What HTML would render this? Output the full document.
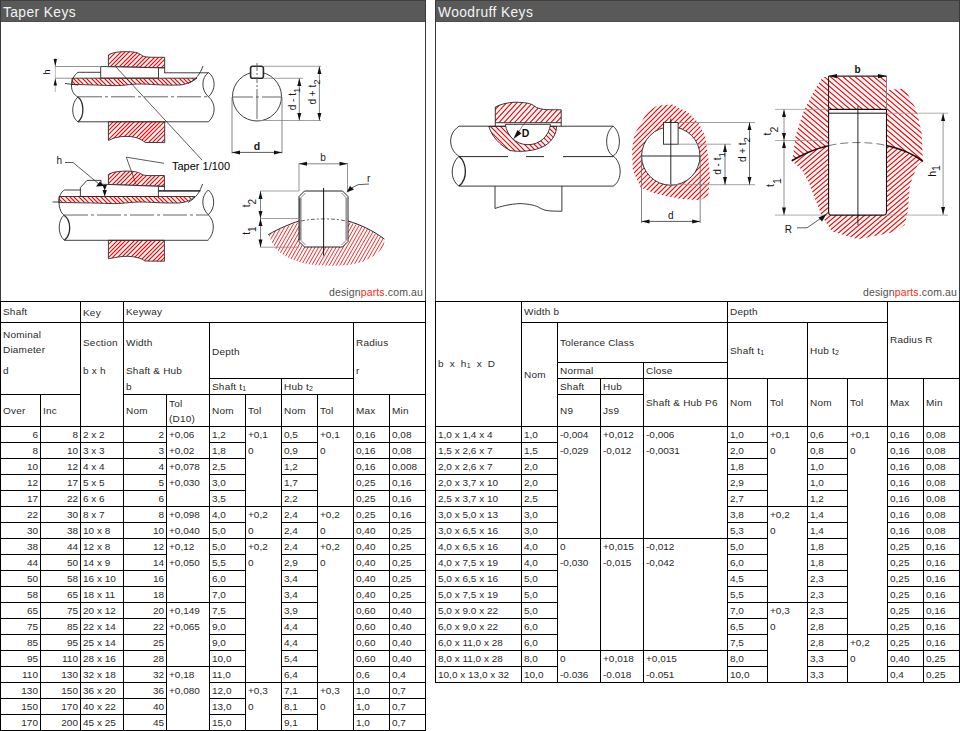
<!DOCTYPE html>
<html><head><meta charset="utf-8"><style>
html,body{margin:0;padding:0;background:#fff;}
body{width:960px;height:731px;position:relative;overflow:hidden;font-family:"Liberation Sans",sans-serif;}
.c{position:absolute;box-sizing:border-box;border:1px solid #000;}
.t{position:absolute;font-size:10px;line-height:20px;color:#2a2a2a;white-space:nowrap;transform:scaleY(0.9);transform-origin:0 13px;}
.th{position:absolute;font-size:10px;line-height:20px;color:#2a2a2a;white-space:nowrap;letter-spacing:0.2px;transform:scaleY(0.9);transform-origin:0 13px;}
.t sub,.th sub{font-size:7px;vertical-align:-1px;line-height:0;}
.panel{position:absolute;top:0;box-sizing:border-box;border-left:1px solid #3a3a3a;border-right:1px solid #3a3a3a;border-top:1px solid #404040;}
.hd{position:absolute;left:0;right:0;top:0;height:20px;background:#595959;border-bottom:1px solid #4e4e4e;}
.ttl{position:absolute;left:2px;top:2px;font-size:13.8px;letter-spacing:0.4px;line-height:20px;color:#f4f4f4;white-space:nowrap;}
.brand{position:absolute;font-size:10.5px;line-height:20px;color:#505050;white-space:nowrap;letter-spacing:0.13px;}
.brand span{color:#ff2a1a;}
svg{position:absolute;top:0;left:0;}
</style></head><body>
<div class="panel" style="left:0;width:426px;height:302px">
  <div class="hd"></div><div class="ttl">Taper Keys</div>
</div>
<div class="panel" style="left:435px;width:525px;height:302px">
  <div class="hd"></div><div class="ttl">Woodruff Keys</div>
</div>
<svg width="430" height="300" viewBox="0 0 430 300" style="position:absolute;left:0;top:0">
<defs>
<pattern id="hf" patternUnits="userSpaceOnUse" width="4.3" height="4.3"><path d="M-1,1.1 L1.1,-1 M0,4.3 L4.3,0 M3.2,5.4 L5.4,3.2" stroke="#ff0000" stroke-width="1.2"/></pattern>
<pattern id="hb" patternUnits="userSpaceOnUse" width="4.3" height="4.3"><path d="M-1,3.2 L1.1,5.4 M0,0 L4.3,4.3 M3.2,-1 L5.4,1.1" stroke="#ff0000" stroke-width="1.2"/></pattern>
<marker id="ar" viewBox="0 0 10 10" refX="10" refY="5" markerWidth="6" markerHeight="4" orient="auto-start-reverse" markerUnits="userSpaceOnUse"><path d="M0,0 L10,5 L0,10 Z" fill="#111"/></marker>
</defs>
<g fill="none" stroke="#2a2a2a" stroke-width="0.9">
<!-- ===== TOP ASSEMBLY ===== -->
<clipPath id="cp1"><path d="M108.4,66.5 L108.4,55 C112,52.5 120,51.2 130,51.8 C136,52 139,53 142,55.5 C145,57.5 150,57.3 164.7,57.3 L164.7,67.8 Z"/></clipPath><path clip-path="url(#cp1)" d="M81.20,69.80L101.80,49.20M86.20,69.80L106.80,49.20M90.20,69.80L110.80,49.20M94.20,69.80L114.80,49.20M98.20,69.80L118.80,49.20M103.20,69.80L123.80,49.20M107.20,69.80L127.80,49.20M111.20,69.80L131.80,49.20M116.20,69.80L136.80,49.20M120.20,69.80L140.80,49.20M124.20,69.80L144.80,49.20M129.20,69.80L149.80,49.20M133.20,69.80L153.80,49.20M137.20,69.80L157.80,49.20M142.20,69.80L162.80,49.20M146.20,69.80L166.80,49.20M150.20,69.80L170.80,49.20M154.20,69.80L174.80,49.20M159.20,69.80L179.80,49.20M163.20,69.80L183.80,49.20M167.20,69.80L187.80,49.20" stroke="#ff0000" stroke-width="1.15" fill="none"/><path d="M108.4,66.5 L108.4,55 C112,52.5 120,51.2 130,51.8 C136,52 139,53 142,55.5 C145,57.5 150,57.3 164.7,57.3 L164.7,67.8 Z" fill="none"/>
<path d="M100.7,66.5 L158.5,67.8 L158.5,78.2 L100.7,78.2 Z" fill="#fff"/>
<path d="M158.5,67.8 L164.7,67.8 L164.7,73.2"/>
<path d="M78,72.3 L100.7,72.3 M164.7,72.8 L208.5,72.8"/>
<clipPath id="cp2"><path d="M72,78.2 L197,78.2 C193,81 188,84 180,85 C160,85.5 150,84 140,84 C130,84 122,86.2 110,85.5 C95,85 80,84.5 72,84.5 Z"/></clipPath><path clip-path="url(#cp2)" d="M53.20,76.20L65.20,88.20M58.20,76.20L70.20,88.20M62.20,76.20L74.20,88.20M67.20,76.20L79.20,88.20M71.20,76.20L83.20,88.20M75.20,76.20L87.20,88.20M80.20,76.20L92.20,88.20M84.20,76.20L96.20,88.20M89.20,76.20L101.20,88.20M93.20,76.20L105.20,88.20M97.20,76.20L109.20,88.20M102.20,76.20L114.20,88.20M106.20,76.20L118.20,88.20M111.20,76.20L123.20,88.20M115.20,76.20L127.20,88.20M119.20,76.20L131.20,88.20M124.20,76.20L136.20,88.20M128.20,76.20L140.20,88.20M133.20,76.20L145.20,88.20M137.20,76.20L149.20,88.20M141.20,76.20L153.20,88.20M146.20,76.20L158.20,88.20M150.20,76.20L162.20,88.20M155.20,76.20L167.20,88.20M159.20,76.20L171.20,88.20M163.20,76.20L175.20,88.20M168.20,76.20L180.20,88.20M172.20,76.20L184.20,88.20M177.20,76.20L189.20,88.20M181.20,76.20L193.20,88.20M185.20,76.20L197.20,88.20M190.20,76.20L202.20,88.20M194.20,76.20L206.20,88.20M199.20,76.20L211.20,88.20M203.20,76.20L215.20,88.20" stroke="#ff0000" stroke-width="1.15" fill="none"/><path d="M72,78.2 L197,78.2 C193,81 188,84 180,85 C160,85.5 150,84 140,84 C130,84 122,86.2 110,85.5 C95,85 80,84.5 72,84.5 Z" fill="none"/>
<path d="M78,72.3 C74,75 71.5,80 71.5,86 C71.5,91 74,95 78,97"/>
<path d="M78,97 C72,102 70,116 78,122"/>
<path d="M78,97 C84,102 85,116 78,122" stroke-width="1.3"/>
<path d="M65,83.5 L78,85"/>
<path d="M203,66 C200,74 196,80 188,83.5"/>
<path d="M208.5,72.5 C201,78 201,90 208.5,96.8 M208.5,72.5 C216,78 216,90 208.5,96.8 M208.5,96.8 C216,103 216,115 208.5,121.8"/>
<path d="M78,121.8 L208.5,121.8"/>
<path d="M78,96.8 L208,96.8" stroke="#555" stroke-dasharray="24,3,3,3"/>
<clipPath id="cp3"><path d="M108.4,121.8 L164.7,121.8 L164.7,142.6 L145.5,142.5 C143,141 141,139 136,137.5 C130,136 122,136 116,137.5 C112,138.5 110,140 108.4,140.4 Z"/></clipPath><path clip-path="url(#cp3)" d="M77.40,144.60L102.20,119.80M81.40,144.60L106.20,119.80M85.40,144.60L110.20,119.80M90.40,144.60L115.20,119.80M94.40,144.60L119.20,119.80M98.40,144.60L123.20,119.80M103.40,144.60L128.20,119.80M107.40,144.60L132.20,119.80M111.40,144.60L136.20,119.80M116.40,144.60L141.20,119.80M120.40,144.60L145.20,119.80M124.40,144.60L149.20,119.80M129.40,144.60L154.20,119.80M133.40,144.60L158.20,119.80M137.40,144.60L162.20,119.80M141.40,144.60L166.20,119.80M146.40,144.60L171.20,119.80M150.40,144.60L175.20,119.80M154.40,144.60L179.20,119.80M159.40,144.60L184.20,119.80M163.40,144.60L188.20,119.80M167.40,144.60L192.20,119.80" stroke="#ff0000" stroke-width="1.15" fill="none"/><path d="M108.4,121.8 L164.7,121.8 L164.7,142.6 L145.5,142.5 C143,141 141,139 136,137.5 C130,136 122,136 116,137.5 C112,138.5 110,140 108.4,140.4 Z" fill="none"/>
<path d="M55,66.5 L100.7,66.5 M55,78.2 L72,78.2" stroke="#777" stroke-width="0.8"/>
<path d="M55.3,58 L55.3,92" stroke="#999" stroke-width="0.7"/>
<path d="M53.6,59 L57,59 L55.3,66.4 Z M53.6,85.6 L57,85.6 L55.3,78.4 Z" fill="#111" stroke="none"/>
<path d="M116,67 L202,160" stroke="#333" stroke-width="0.8"/>
<!-- ===== BOTTOM ASSEMBLY ===== -->
<clipPath id="cp4"><path d="M108.4,184.5 L108.4,174.5 C112,172 120,170.8 130,171.2 C136,171.5 139,172.5 142,174.5 C145,176 150,175.5 164.4,175.5 L164.4,186.3 Z"/></clipPath><path clip-path="url(#cp4)" d="M82.70,188.30L102.20,168.80M86.70,188.30L106.20,168.80M91.70,188.30L111.20,168.80M95.70,188.30L115.20,168.80M99.70,188.30L119.20,168.80M103.70,188.30L123.20,168.80M108.70,188.30L128.20,168.80M112.70,188.30L132.20,168.80M116.70,188.30L136.20,168.80M121.70,188.30L141.20,168.80M125.70,188.30L145.20,168.80M129.70,188.30L149.20,168.80M133.70,188.30L153.20,168.80M138.70,188.30L158.20,168.80M142.70,188.30L162.20,168.80M146.70,188.30L166.20,168.80M151.70,188.30L171.20,168.80M155.70,188.30L175.20,168.80M159.70,188.30L179.20,168.80M164.70,188.30L184.20,168.80M168.70,188.30L188.20,168.80" stroke="#ff0000" stroke-width="1.15" fill="none"/><path d="M108.4,184.5 L108.4,174.5 C112,172 120,170.8 130,171.2 C136,171.5 139,172.5 142,174.5 C145,176 150,175.5 164.4,175.5 L164.4,186.3 Z" fill="none"/>
<path d="M80.4,196.5 L80.4,187.5 L87,180.4 L101,180.4 L101,184.2 L158.4,186.3 L158.4,196.5 Z" fill="#fff"/>
<path d="M158.4,186.3 L164.4,186.3 L164.4,190.9"/>
<path d="M64.4,190 L80.4,190 M158.4,190.9 L200.3,190.9" />
<path d="M158.4,190.9 L200.3,190.9" stroke-width="1.4"/>
<clipPath id="cp5"><path d="M59,196.5 L195,196.5 C192,199.5 187,202.5 178,203 C160,203.2 150,202 140,202 C130,202 122,204 110,203.5 C95,203 75,202.6 59,202.6 Z"/></clipPath><path clip-path="url(#cp5)" d="M41.50,194.50L53.00,206.00M45.50,194.50L57.00,206.00M49.50,194.50L61.00,206.00M54.50,194.50L66.00,206.00M58.50,194.50L70.00,206.00M63.50,194.50L75.00,206.00M67.50,194.50L79.00,206.00M71.50,194.50L83.00,206.00M76.50,194.50L88.00,206.00M80.50,194.50L92.00,206.00M85.50,194.50L97.00,206.00M89.50,194.50L101.00,206.00M93.50,194.50L105.00,206.00M98.50,194.50L110.00,206.00M102.50,194.50L114.00,206.00M107.50,194.50L119.00,206.00M111.50,194.50L123.00,206.00M115.50,194.50L127.00,206.00M120.50,194.50L132.00,206.00M124.50,194.50L136.00,206.00M129.50,194.50L141.00,206.00M133.50,194.50L145.00,206.00M137.50,194.50L149.00,206.00M142.50,194.50L154.00,206.00M146.50,194.50L158.00,206.00M151.50,194.50L163.00,206.00M155.50,194.50L167.00,206.00M159.50,194.50L171.00,206.00M164.50,194.50L176.00,206.00M168.50,194.50L180.00,206.00M173.50,194.50L185.00,206.00M177.50,194.50L189.00,206.00M181.50,194.50L193.00,206.00M186.50,194.50L198.00,206.00M190.50,194.50L202.00,206.00M195.50,194.50L207.00,206.00M199.50,194.50L211.00,206.00" stroke="#ff0000" stroke-width="1.15" fill="none"/><path d="M59,196.5 L195,196.5 C192,199.5 187,202.5 178,203 C160,203.2 150,202 140,202 C130,202 122,204 110,203.5 C95,203 75,202.6 59,202.6 Z" fill="none"/>
<path d="M64.4,190 C61,192 59,196 59,202 C59,208 61,213 64,215.2"/>
<path d="M64,215.2 C58,220 57,234 64.4,240.3"/>
<path d="M64,215.2 C71,220 72,234 64.4,240.3" stroke-width="1.3"/>
<path d="M52.5,202 L60,202"/>
<path d="M202.5,184 C200,192 196,198 188,202.5"/>
<path d="M208.3,190 C201,196 201,208 208.3,214.8 M208.3,190 C215.5,196 215.5,208 208.3,214.8 M208.3,214.8 C215,221 215,233 208.3,239.7"/>
<path d="M64.4,240.3 L208.3,240.3"/>
<path d="M64,215 L208,215" stroke="#555" stroke-dasharray="24,3,3,3"/>
<clipPath id="cp6"><path d="M108.4,240.3 L164.4,240.3 L164.4,261.2 L145,261 C143,259.5 141,258.5 137,257.5 C131,256 125,256 118,257 C113,257.8 110,258.5 108.4,258.7 Z"/></clipPath><path clip-path="url(#cp6)" d="M76.80,263.20L101.70,238.30M81.80,263.20L106.70,238.30M85.80,263.20L110.70,238.30M89.80,263.20L114.70,238.30M94.80,263.20L119.70,238.30M98.80,263.20L123.70,238.30M102.80,263.20L127.70,238.30M106.80,263.20L131.70,238.30M111.80,263.20L136.70,238.30M115.80,263.20L140.70,238.30M119.80,263.20L144.70,238.30M124.80,263.20L149.70,238.30M128.80,263.20L153.70,238.30M132.80,263.20L157.70,238.30M137.80,263.20L162.70,238.30M141.80,263.20L166.70,238.30M145.80,263.20L170.70,238.30M150.80,263.20L175.70,238.30M154.80,263.20L179.70,238.30M158.80,263.20L183.70,238.30M162.80,263.20L187.70,238.30M167.80,263.20L192.70,238.30" stroke="#ff0000" stroke-width="1.15" fill="none"/><path d="M108.4,240.3 L164.4,240.3 L164.4,261.2 L145,261 C143,259.5 141,258.5 137,257.5 C131,256 125,256 118,257 C113,257.8 110,258.5 108.4,258.7 Z" fill="none"/>
<path d="M65,162.5 L73,162.5 L99,184" stroke="#333" stroke-width="0.8"/>
<path d="M96,186.5 L104,186 L100,181.5 Z" fill="#111" stroke="none"/>
<path d="M104.7,184.2 L104.7,196.5" stroke="#555" stroke-width="0.8" stroke-dasharray="2,1"/>
<path d="M102.5,190 L106.9,190 L104.7,196.5 Z M102.5,185 L106.9,185 L104.7,190.5 Z" fill="#111" stroke="none"/>
<path d="M164,163.3 L126.3,157.2 L136.3,184.9" stroke="#333" stroke-width="0.8"/>
<!-- ===== CIRCLE VIEW ===== -->
<circle cx="257" cy="96.5" r="24.5"/>
<rect x="250.6" y="66.3" width="12.8" height="12" rx="2" fill="#fff" stroke-width="1.6"/>
<path d="M257,63 L257,120.5" stroke="#555" stroke-dasharray="8,2,2,2,6,2,2,2,30"/>
<path d="M232,97 L282,97" stroke="#555" stroke-dasharray="21,3,3,3,30"/>
<path d="M263.4,66.3 L321,66.3 M263.4,78.3 L303,78.3 M257,120.5 L321,120.5" stroke="#888" stroke-width="0.8"/>
<path d="M299.3,78.3 L299.3,120.5 M319.4,66.3 L319.4,120.5" stroke="#666" stroke-width="0.8"/>
<path d="M297.3,86 L301.3,86 L299.3,78.3 Z M297.3,113 L301.3,113 L299.3,120.5 Z M317.4,74 L321.4,74 L319.4,66.3 Z M317.4,113 L321.4,113 L319.4,120.5 Z" fill="#111" stroke="none"/>
<path d="M232,97 L232,153.5 M282,97 L282,153.5" stroke="#777" stroke-width="0.9"/>
<path d="M232,152.4 L282,152.4" stroke="#444" stroke-width="0.9"/>
<path d="M232,152.4 L240,150.4 L240,154.4 Z M282,152.4 L274,150.4 L274,154.4 Z" fill="#111" stroke="none"/>
<!-- ===== KEY SECTION ===== -->
<clipPath id="cp7"><path d="M268.2,234.7 C285,226 300,220.5 323.5,218.5 C345,218.5 365,226 384.4,239 L384,246 C380,252 372,258 362,262 C350,266 335,266 323,265.5 C300,265 285,258 275,248 Z"/></clipPath><path clip-path="url(#cp7)" d="M233.27,268.00L262.70,216.50M236.77,268.00L266.20,216.50M240.27,268.00L269.70,216.50M243.77,268.00L273.20,216.50M247.27,268.00L276.70,216.50M250.77,268.00L280.20,216.50M254.27,268.00L283.70,216.50M257.77,268.00L287.20,216.50M261.27,268.00L290.70,216.50M264.77,268.00L294.20,216.50M268.27,268.00L297.70,216.50M271.77,268.00L301.20,216.50M275.27,268.00L304.70,216.50M278.77,268.00L308.20,216.50M282.27,268.00L311.70,216.50M285.77,268.00L315.20,216.50M289.27,268.00L318.70,216.50M292.77,268.00L322.20,216.50M296.27,268.00L325.70,216.50M299.77,268.00L329.20,216.50M303.27,268.00L332.70,216.50M306.77,268.00L336.20,216.50M310.27,268.00L339.70,216.50M313.77,268.00L343.20,216.50M317.27,268.00L346.70,216.50M320.77,268.00L350.20,216.50M324.27,268.00L353.70,216.50M327.77,268.00L357.20,216.50M331.27,268.00L360.70,216.50M334.77,268.00L364.20,216.50M338.27,268.00L367.70,216.50M341.77,268.00L371.20,216.50M345.27,268.00L374.70,216.50M348.77,268.00L378.20,216.50M352.27,268.00L381.70,216.50M355.77,268.00L385.20,216.50M359.27,268.00L388.70,216.50M362.77,268.00L392.20,216.50M366.27,268.00L395.70,216.50M369.77,268.00L399.20,216.50M373.27,268.00L402.70,216.50M376.77,268.00L406.20,216.50M380.27,268.00L409.70,216.50M383.77,268.00L413.20,216.50M387.27,268.00L416.70,216.50" stroke="#ff0000" stroke-width="0.85" fill="none"/>
<path d="M268.2,234.7 C280,228 290,224 299,221 M348,221 C360,224.5 372,230 384.4,239" stroke="#222" stroke-width="1"/>
<path d="M304.5,191 L342.5,191 L348,196.5 L348,241.5 L342.5,247 L304.5,247 L299,241.5 L299,196.5 Z" fill="#fff" stroke="#222" stroke-width="1"/>
<path d="M305.5,193 L301,197.5 L301,240.5 L305.5,245 M341.5,193 L346,197.5 L346,240.5 L341.5,245" stroke="#777" stroke-width="0.9"/>
<path d="M346.8,198 L346.8,240" stroke="#999" stroke-width="1.6"/>
<path d="M299.8,198 L299.8,240" stroke="#444" stroke-width="1.2"/>
<path d="M301,221 C312,218.5 335,218 346,221" stroke="#555" stroke-width="0.9" stroke-dasharray="4,2,2,2"/>
<path d="M323.6,188 L323.6,255.5" stroke="#111" stroke-width="1"/>
<path d="M299,163 L299,191 M347.5,163 L347.5,191" stroke="#888" stroke-width="0.9"/>
<path d="M299,163.8 L347.5,163.8" stroke="#666" stroke-width="0.8"/>
<path d="M299,163.8 L307,161.8 L307,165.8 Z M347.5,163.8 L339.5,161.8 L339.5,165.8 Z" fill="#111" stroke="none"/>
<path d="M260,191 L299,191 M260,218.5 L301,218.5 M260,247.2 L299,247.2" stroke="#888" stroke-width="0.8"/>
<path d="M260.5,191 L260.5,247.2" stroke="#666" stroke-width="0.8"/>
<path d="M258.5,199 L262.5,199 L260.5,191 Z M258.5,211 L262.5,211 L260.5,218.5 Z M258.5,226 L262.5,226 L260.5,218.5 Z M258.5,239.5 L262.5,239.5 L260.5,247.2 Z" fill="#111" stroke="none"/>
<path d="M352,187.7 L358,184.7 L369,184" stroke="#333" stroke-width="0.8"/>
<path d="M346.5,192.5 L350,186 L354,189.5 Z" fill="#111" stroke="none"/>
</g>
<g font-family="Liberation Sans" fill="#1a1a1a">
<text x="0" y="0" font-size="9.5" transform="translate(49.8,72.2) rotate(-90)" text-anchor="middle" fill="#000">h</text>
<text x="56.5" y="164" font-size="10">h</text>
<text x="172" y="169.6" font-size="11" fill="#000">Taper 1/100</text>
<text x="0" y="0" font-size="10" transform="translate(295.5,99) rotate(-90)" text-anchor="middle">d - t<tspan font-size="9.5" dy="4">1</tspan></text>
<text x="0" y="0" font-size="10" transform="translate(315.5,92) rotate(-90)" text-anchor="middle">d + t<tspan font-size="9.5" dy="4">2</tspan></text>
<text x="257" y="149.5" font-size="10.5" font-weight="bold" text-anchor="middle">d</text>
<text x="323" y="161" font-size="10" text-anchor="middle">b</text>
<text x="367" y="182" font-size="10">r</text>
<text x="0" y="0" font-size="10" transform="translate(249.5,203) rotate(-90)" text-anchor="middle">t<tspan font-size="10" dy="6.5">2</tspan></text>
<text x="0" y="0" font-size="10" transform="translate(249.5,230.5) rotate(-90)" text-anchor="middle">t<tspan font-size="10" dy="6.5">1</tspan></text>
</g>
</svg>

<svg width="960" height="300" viewBox="0 0 960 300" style="position:absolute;left:0;top:0">
<defs>
<pattern id="hb6" patternUnits="userSpaceOnUse" width="6" height="6"><path d="M-1,5 L1,7 M0,0 L6,6 M5,-1 L7,1" stroke="#ff0000" stroke-width="1.1"/></pattern>
<pattern id="hf45" patternUnits="userSpaceOnUse" width="4.5" height="4.5"><path d="M-1,1 L1,-1 M0,4.5 L4.5,0 M3.5,5.5 L5.5,3.5" stroke="#ff0000" stroke-width="1.05"/></pattern>
<pattern id="hb45" patternUnits="userSpaceOnUse" width="4.5" height="4.5"><path d="M-1,3.5 L1,5.5 M0,0 L4.5,4.5 M3.5,-1 L5.5,1" stroke="#ff0000" stroke-width="1.05"/></pattern>
</defs>
<g fill="none" stroke="#222" stroke-width="0.9">
<!-- ===== WOODRUFF SHAFT ===== -->
<clipPath id="cp8"><path d="M495.3,122.7 L495.3,107 C500,104.5 507,102.5 515,102.2 C525,102.5 531,103 535,106.5 C539,109.5 545,109.9 561.2,109.8 L561.2,122.7 Z"/></clipPath><path clip-path="url(#cp8)" d="M465.83,124.70L488.10,100.20M471.03,124.70L493.30,100.20M476.23,124.70L498.50,100.20M481.43,124.70L503.70,100.20M486.63,124.70L508.90,100.20M491.83,124.70L514.10,100.20M497.03,124.70L519.30,100.20M502.23,124.70L524.50,100.20M507.43,124.70L529.70,100.20M512.63,124.70L534.90,100.20M517.83,124.70L540.10,100.20M523.03,124.70L545.30,100.20M528.23,124.70L550.50,100.20M533.43,124.70L555.70,100.20M538.63,124.70L560.90,100.20M543.83,124.70L566.10,100.20M549.03,124.70L571.30,100.20M554.23,124.70L576.50,100.20M559.43,124.70L581.70,100.20M564.63,124.70L586.90,100.20" stroke="#ff0000" stroke-width="1.15" fill="none"/><path d="M495.3,122.7 L495.3,107 C500,104.5 507,102.5 515,102.2 C525,102.5 531,103 535,106.5 C539,109.5 545,109.9 561.2,109.8 L561.2,122.7 Z" fill="none"/>
<path d="M495.3,122.7 L495.3,126.3 M561.2,122.7 L561.2,126.3"/>
<path d="M459,126.2 L613.1,126.2"/>
<clipPath id="cp9"><path d="M488.8,126.4 C492,137 500,145 510,150.5 C518,152 535,152 546,145 C553,140 556.5,133 556.5,126.4 Z"/></clipPath><path clip-path="url(#cp9)" d="M452.40,124.40L482.00,154.00M457.40,124.40L487.00,154.00M462.40,124.40L492.00,154.00M467.40,124.40L497.00,154.00M472.40,124.40L502.00,154.00M478.40,124.40L508.00,154.00M483.40,124.40L513.00,154.00M488.40,124.40L518.00,154.00M493.40,124.40L523.00,154.00M498.40,124.40L528.00,154.00M504.40,124.40L534.00,154.00M509.40,124.40L539.00,154.00M514.40,124.40L544.00,154.00M519.40,124.40L549.00,154.00M524.40,124.40L554.00,154.00M530.40,124.40L560.00,154.00M535.40,124.40L565.00,154.00M540.40,124.40L570.00,154.00M545.40,124.40L575.00,154.00M550.40,124.40L580.00,154.00M556.40,124.40L586.00,154.00M561.40,124.40L591.00,154.00" stroke="#ff0000" stroke-width="1.15" fill="none"/><path d="M488.8,126.4 C492,137 500,145 510,150.5 C518,152 535,152 546,145 C553,140 556.5,133 556.5,126.4 Z" fill="none"/>
<path d="M505.3,124.3 L550.5,124.3 C549,136 540,144.7 528,144.7 C516,144.7 507,136 505.3,124.3 Z" fill="#fff"/>
<path d="M459,126.2 C452,131 450.5,137 450.7,142 C451,148 454,153 459,156.3"/>
<path d="M459,156.3 C451,163 449,179 459,186.1"/>
<path d="M459,156.3 C467,163 468,179 459,186.1" stroke-width="1.3"/>
<path d="M613.1,126.2 C605,132 604,150 613.1,156.1 M613.1,126.2 C621,132 622,150 613.1,156.1 M613.1,156.1 C622,162 623,180 613.1,186.2"/>
<path d="M459,186.1 L613.1,186.1"/>
<path d="M459,156.6 L613,156.6" stroke="#111" stroke-dasharray="49,18,18,19,200"/>
<path d="M495,186.1 L495,208.5 C500,206.5 510,204 520,203.6 C530,204 536,205.5 540,208 C545,211 550,211.2 561.9,211.2 L561.9,186.1"/>
<path d="M525,122.5 L517,134" stroke="#333" stroke-width="0.6"/>
<path d="M513.3,139 L517.5,130 L521.5,133.5 Z" fill="#111" stroke="none"/>
<!-- ===== WOODRUFF CIRCLE ===== -->
<clipPath id="cp10"><path d="M661.2,105.2 L672.2,104.4 L687.9,112.3 L698.9,123.3 L705.2,135.9 L708.3,157.9 L710,176.8 L708.3,195.6 L700.5,200.3 L680,198.8 L656.4,194 L640.7,187.8 L632.9,170.5 L632,150 L634.4,134.3 L640.7,123.3 L647,112.3 L656.4,106 Z"/></clipPath><path clip-path="url(#cp10)" d="M524.70,202.30L624.60,102.40M529.70,202.30L629.60,102.40M534.70,202.30L634.60,102.40M539.70,202.30L639.60,102.40M544.70,202.30L644.60,102.40M549.70,202.30L649.60,102.40M554.70,202.30L654.60,102.40M559.70,202.30L659.60,102.40M564.70,202.30L664.60,102.40M569.70,202.30L669.60,102.40M574.70,202.30L674.60,102.40M579.70,202.30L679.60,102.40M584.70,202.30L684.60,102.40M589.70,202.30L689.60,102.40M594.70,202.30L694.60,102.40M599.70,202.30L699.60,102.40M604.70,202.30L704.60,102.40M609.70,202.30L709.60,102.40M614.70,202.30L714.60,102.40M619.70,202.30L719.60,102.40M624.70,202.30L724.60,102.40M629.70,202.30L729.60,102.40M634.70,202.30L734.60,102.40M639.70,202.30L739.60,102.40M644.70,202.30L744.60,102.40M649.70,202.30L749.60,102.40M654.70,202.30L754.60,102.40M659.70,202.30L759.60,102.40M664.70,202.30L764.60,102.40M669.70,202.30L769.60,102.40M674.70,202.30L774.60,102.40M679.70,202.30L779.60,102.40M684.70,202.30L784.60,102.40M689.70,202.30L789.60,102.40M694.70,202.30L794.60,102.40M699.70,202.30L799.60,102.40M704.70,202.30L804.60,102.40M709.70,202.30L809.60,102.40M714.70,202.30L814.60,102.40" stroke="#ff0000" stroke-width="1.15" fill="none"/>
<circle cx="670.8" cy="156" r="29.2" fill="#fff"/>
<rect x="663.5" y="122.5" width="14.6" height="21.7" fill="#fff"/>
<path d="M670.8,118.6 L670.8,184.6 M641.5,156 L700.2,156" stroke="#111" stroke-width="0.9"/>
<path d="M678.1,122.5 L755,122.5 M678.1,144.2 L731,144.2 M670.8,184.7 L755,184.7" stroke="#888" stroke-width="0.8"/>
<path d="M725,144.2 L725,184.7 M749.5,122.5 L749.5,184.7" stroke="#555" stroke-width="0.8"/>
<path d="M723,152 L727,152 L725,144.2 Z M723,177 L727,177 L725,184.7 Z M747.5,130 L751.5,130 L749.5,122.5 Z M747.5,177 L751.5,177 L749.5,184.7 Z" fill="#111" stroke="none"/>
<path d="M641.5,156 L641.5,223 M700.2,156 L700.2,223" stroke="#666" stroke-width="0.8"/>
<path d="M641.5,221.4 L700.2,221.4" stroke="#333" stroke-width="0.8"/>
<path d="M641.5,221.4 L649.5,219.4 L649.5,223.4 Z M700.2,221.4 L692.2,219.4 L692.2,223.4 Z" fill="#111" stroke="none"/>
<!-- ===== WOODRUFF KEY SECTION ===== -->
<clipPath id="cp11"><path d="M791.7,160.8 C805,153 815,148.5 828.6,145.7 L886.5,145.5 C900,148.5 912,153 922.9,161.3 L921.6,132.7 L916.4,109.4 L904.7,88.6 L886.5,90 L886.5,76.1 L822.9,76.9 L813.8,91.2 L803.4,112 L795.6,135.3 L793,156 Z"/></clipPath><path clip-path="url(#cp11)" d="M678.56,74.10L783.50,163.30M684.76,74.10L789.70,163.30M690.96,74.10L795.90,163.30M697.16,74.10L802.10,163.30M703.36,74.10L808.30,163.30M709.56,74.10L814.50,163.30M715.76,74.10L820.70,163.30M721.96,74.10L826.90,163.30M728.16,74.10L833.10,163.30M734.36,74.10L839.30,163.30M740.56,74.10L845.50,163.30M746.76,74.10L851.70,163.30M752.96,74.10L857.90,163.30M759.16,74.10L864.10,163.30M765.36,74.10L870.30,163.30M771.56,74.10L876.50,163.30M777.76,74.10L882.70,163.30M783.96,74.10L888.90,163.30M790.16,74.10L895.10,163.30M796.36,74.10L901.30,163.30M802.56,74.10L907.50,163.30M808.76,74.10L913.70,163.30M814.96,74.10L919.90,163.30M821.16,74.10L926.10,163.30M827.36,74.10L932.30,163.30M833.56,74.10L938.50,163.30M839.76,74.10L944.70,163.30M845.96,74.10L950.90,163.30M852.16,74.10L957.10,163.30M858.36,74.10L963.30,163.30M864.56,74.10L969.50,163.30M870.76,74.10L975.70,163.30M876.96,74.10L981.90,163.30M883.16,74.10L988.10,163.30M889.36,74.10L994.30,163.30M895.56,74.10L1000.50,163.30M901.76,74.10L1006.70,163.30M907.96,74.10L1012.90,163.30M914.16,74.10L1019.10,163.30M920.36,74.10L1025.30,163.30M926.56,74.10L1031.50,163.30" stroke="#ff0000" stroke-width="1.15" fill="none"/>
<clipPath id="cp12"><path d="M791.7,160.8 C805,153 815,148.5 828.6,145.7 L886.5,145.5 C900,148.5 912,153 922.9,161.3 L917.7,165 L909.9,185 L908,210 L904.7,225 L894.3,232 L858,239.2 L832,231.4 L821.6,215.8 L808.6,182 L802,170 Z"/></clipPath><path clip-path="url(#cp12)" d="M669.06,241.20L784.00,143.50M674.76,241.20L789.70,143.50M680.46,241.20L795.40,143.50M686.16,241.20L801.10,143.50M691.86,241.20L806.80,143.50M697.56,241.20L812.50,143.50M703.26,241.20L818.20,143.50M708.96,241.20L823.90,143.50M714.66,241.20L829.60,143.50M720.36,241.20L835.30,143.50M726.06,241.20L841.00,143.50M731.76,241.20L846.70,143.50M737.46,241.20L852.40,143.50M743.16,241.20L858.10,143.50M748.86,241.20L863.80,143.50M754.56,241.20L869.50,143.50M760.26,241.20L875.20,143.50M765.96,241.20L880.90,143.50M771.66,241.20L886.60,143.50M777.36,241.20L892.30,143.50M783.06,241.20L898.00,143.50M788.76,241.20L903.70,143.50M794.46,241.20L909.40,143.50M800.16,241.20L915.10,143.50M805.86,241.20L920.80,143.50M811.56,241.20L926.50,143.50M817.26,241.20L932.20,143.50M822.96,241.20L937.90,143.50M828.66,241.20L943.60,143.50M834.36,241.20L949.30,143.50M840.06,241.20L955.00,143.50M845.76,241.20L960.70,143.50M851.46,241.20L966.40,143.50M857.16,241.20L972.10,143.50M862.86,241.20L977.80,143.50M868.56,241.20L983.50,143.50M874.26,241.20L989.20,143.50M879.96,241.20L994.90,143.50M885.66,241.20L1000.60,143.50M891.36,241.20L1006.30,143.50M897.06,241.20L1012.00,143.50M902.76,241.20L1017.70,143.50M908.46,241.20L1023.40,143.50M914.16,241.20L1029.10,143.50M919.86,241.20L1034.80,143.50M925.56,241.20L1040.50,143.50" stroke="#ff0000" stroke-width="1.15" fill="none"/>
<path d="M828.6,109.4 L886.5,109.4 L886.5,212 Q886.5,215.1 883.5,215.1 L831.6,215.1 Q828.6,215.1 828.6,212 Z" fill="#fff" stroke="#111" stroke-width="1.1"/>
<path d="M828.6,113.2 L886.5,113.2" stroke="#111" stroke-width="1"/>
<path d="M828.6,76.1 L828.6,109.4" stroke="#111" stroke-width="1"/>
<path d="M886.5,76.1 L886.5,109.4" stroke="#777" stroke-width="0.9"/>
<path d="M828.6,76.1 L886.5,76.1" stroke="#222" stroke-width="1.1"/>
<path d="M828.6,76.1 L837,74 L837,78.2 Z M886.5,76.1 L878,74 L878,78.2 Z" fill="#111" stroke="none"/>
<path d="M791.7,160.8 C805,153 815,148.5 828.6,145.7 M886.5,145.5 C900,148.5 912,153 922.9,161.3" stroke="#111" stroke-width="1.6"/>
<path d="M828.6,145.7 C845,141.5 870,141.5 886.5,145.5" stroke="#555" stroke-width="0.8" stroke-dasharray="8,4"/>
<path d="M857.9,106.2 L857.9,225" stroke="#111" stroke-width="0.9"/>
<path d="M775,109.4 L828.6,109.4 M775,140.5 L830,140.5 M775,215.1 L828.6,215.1" stroke="#999" stroke-width="0.8"/>
<path d="M886.5,113.2 L948,113.2 M886.5,215.1 L948,215.1" stroke="#999" stroke-width="0.8"/>
<path d="M784,109.4 L784,215.1 M943.1,113.3 L943.1,214.8" stroke="#777" stroke-width="0.8"/>
<path d="M782,117 L786,117 L784,109.4 Z M782,133 L786,133 L784,140.5 Z M782,148 L786,148 L784,140.5 Z M782,207.5 L786,207.5 L784,215.1 Z M941.1,121 L945.1,121 L943.1,113.3 Z M941.1,207 L945.1,207 L943.1,214.8 Z" fill="#111" stroke="none"/>
<path d="M797,227.8 L807,227.8 L822,217.5" stroke="#333" stroke-width="0.8"/>
<path d="M826.5,214 L818.5,217.5 L822,221.5 Z" fill="#111" stroke="none"/>
</g>
<g font-family="Liberation Sans" fill="#111">
<text x="521.8" y="137.3" font-size="10.5" font-weight="bold">D</text>
<text x="0" y="0" font-size="10" transform="translate(720.5,163.5) rotate(-90)" text-anchor="middle">d - t<tspan font-size="9.5" dy="4">1</tspan></text>
<text x="0" y="0" font-size="10" transform="translate(746,149.6) rotate(-90)" text-anchor="middle">d + t<tspan font-size="9.5" dy="4">2</tspan></text>
<text x="670.8" y="218.5" font-size="10" text-anchor="middle">d</text>
<text x="857.5" y="72.5" font-size="10" font-weight="bold" text-anchor="middle">b</text>
<text x="0" y="0" font-size="10.5" transform="translate(771,131) rotate(-90)" text-anchor="middle">t<tspan font-size="10.5" dy="6.8">2</tspan></text>
<text x="0" y="0" font-size="10.5" transform="translate(774.4,182.5) rotate(-90)" text-anchor="middle">t<tspan font-size="10.5" dy="7">1</tspan></text>
<text x="0" y="0" font-size="10.5" transform="translate(935.6,171) rotate(-90)" text-anchor="middle">h<tspan font-size="10.5" dy="4.4">1</tspan></text>
<text x="784.7" y="232.7" font-size="10">R</text>
</g>
</svg>

<div class="brand" style="right:537px;top:282px">design<span>parts</span>.com.au</div>
<div class="brand" style="right:3px;top:282px">design<span>parts</span>.com.au</div>
<div class="c" style="left:0px;top:301px;width:81px;height:22px"></div>
<div class="c" style="left:80px;top:301px;width:44px;height:22px"></div>
<div class="c" style="left:123px;top:301px;width:303px;height:22px"></div>
<div class="c" style="left:0px;top:322px;width:81px;height:73px"></div>
<div class="c" style="left:80px;top:322px;width:44px;height:105px"></div>
<div class="c" style="left:123px;top:322px;width:87px;height:73px"></div>
<div class="c" style="left:209px;top:322px;width:145px;height:57px"></div>
<div class="c" style="left:353px;top:322px;width:73px;height:73px"></div>
<div class="c" style="left:209px;top:378px;width:73px;height:17px"></div>
<div class="c" style="left:281px;top:378px;width:73px;height:17px"></div>
<div class="c" style="left:0px;top:394px;width:41px;height:33px"></div>
<div class="c" style="left:40px;top:394px;width:41px;height:33px"></div>
<div class="c" style="left:123px;top:394px;width:44px;height:33px"></div>
<div class="c" style="left:166px;top:394px;width:44px;height:33px"></div>
<div class="c" style="left:209px;top:394px;width:37px;height:33px"></div>
<div class="c" style="left:245px;top:394px;width:37px;height:33px"></div>
<div class="c" style="left:281px;top:394px;width:37px;height:33px"></div>
<div class="c" style="left:317px;top:394px;width:37px;height:33px"></div>
<div class="c" style="left:353px;top:394px;width:37px;height:33px"></div>
<div class="c" style="left:389px;top:394px;width:37px;height:33px"></div>
<div class="th" style="left:3px;top:302px">Shaft</div>
<div class="th" style="left:83px;top:303px">Key</div>
<div class="th" style="left:126px;top:302px">Keyway</div>
<div class="th" style="left:3px;top:325px">Nominal</div>
<div class="th" style="left:3px;top:340px">Diameter</div>
<div class="th" style="left:3px;top:361px">d</div>
<div class="th" style="left:83px;top:333px">Section</div>
<div class="th" style="left:83px;top:361px">b x h</div>
<div class="th" style="left:126px;top:333px">Width</div>
<div class="th" style="left:126px;top:361px">Shaft &amp; Hub</div>
<div class="th" style="left:126px;top:377px">b</div>
<div class="th" style="left:212px;top:342px">Depth</div>
<div class="th" style="left:356px;top:333px">Radius</div>
<div class="th" style="left:356px;top:361px">r</div>
<div class="th" style="left:212px;top:377px">Shaft t<sub>1</sub></div>
<div class="th" style="left:284px;top:377px">Hub t<sub>2</sub></div>
<div class="th" style="left:3px;top:401px">Over</div>
<div class="th" style="left:43px;top:401px">Inc</div>
<div class="th" style="left:126px;top:401px">Nom</div>
<div class="th" style="left:169px;top:394px">Tol</div>
<div class="th" style="left:169px;top:409px">(D10)</div>
<div class="th" style="left:212px;top:401px">Nom</div>
<div class="th" style="left:248px;top:401px">Tol</div>
<div class="th" style="left:284px;top:401px">Nom</div>
<div class="th" style="left:320px;top:401px">Tol</div>
<div class="th" style="left:356px;top:401px">Max</div>
<div class="th" style="left:392px;top:401px">Min</div>
<div class="c" style="left:0px;top:426px;width:41px;height:17px"></div>
<div class="c" style="left:40px;top:426px;width:41px;height:17px"></div>
<div class="c" style="left:80px;top:426px;width:44px;height:17px"></div>
<div class="c" style="left:123px;top:426px;width:44px;height:17px"></div>
<div class="c" style="left:209px;top:426px;width:37px;height:17px"></div>
<div class="c" style="left:281px;top:426px;width:37px;height:17px"></div>
<div class="c" style="left:353px;top:426px;width:37px;height:17px"></div>
<div class="c" style="left:389px;top:426px;width:37px;height:17px"></div>
<div class="t" style="right:922px;top:425px">6</div>
<div class="t" style="right:882px;top:425px">8</div>
<div class="t" style="left:83px;top:425px">2 x 2</div>
<div class="t" style="right:796px;top:425px">2</div>
<div class="t" style="left:212px;top:425px">1,2</div>
<div class="t" style="left:284px;top:425px">0,5</div>
<div class="t" style="left:356px;top:425px">0,16</div>
<div class="t" style="left:392px;top:425px">0,08</div>
<div class="c" style="left:0px;top:442px;width:41px;height:17px"></div>
<div class="c" style="left:40px;top:442px;width:41px;height:17px"></div>
<div class="c" style="left:80px;top:442px;width:44px;height:17px"></div>
<div class="c" style="left:123px;top:442px;width:44px;height:17px"></div>
<div class="c" style="left:209px;top:442px;width:37px;height:17px"></div>
<div class="c" style="left:281px;top:442px;width:37px;height:17px"></div>
<div class="c" style="left:353px;top:442px;width:37px;height:17px"></div>
<div class="c" style="left:389px;top:442px;width:37px;height:17px"></div>
<div class="t" style="right:922px;top:441px">8</div>
<div class="t" style="right:882px;top:441px">10</div>
<div class="t" style="left:83px;top:441px">3 x 3</div>
<div class="t" style="right:796px;top:441px">3</div>
<div class="t" style="left:212px;top:441px">1,8</div>
<div class="t" style="left:284px;top:441px">0,9</div>
<div class="t" style="left:356px;top:441px">0,16</div>
<div class="t" style="left:392px;top:441px">0,08</div>
<div class="c" style="left:0px;top:458px;width:41px;height:17px"></div>
<div class="c" style="left:40px;top:458px;width:41px;height:17px"></div>
<div class="c" style="left:80px;top:458px;width:44px;height:17px"></div>
<div class="c" style="left:123px;top:458px;width:44px;height:17px"></div>
<div class="c" style="left:209px;top:458px;width:37px;height:17px"></div>
<div class="c" style="left:281px;top:458px;width:37px;height:17px"></div>
<div class="c" style="left:353px;top:458px;width:37px;height:17px"></div>
<div class="c" style="left:389px;top:458px;width:37px;height:17px"></div>
<div class="t" style="right:922px;top:457px">10</div>
<div class="t" style="right:882px;top:457px">12</div>
<div class="t" style="left:83px;top:457px">4 x 4</div>
<div class="t" style="right:796px;top:457px">4</div>
<div class="t" style="left:212px;top:457px">2,5</div>
<div class="t" style="left:284px;top:457px">1,2</div>
<div class="t" style="left:356px;top:457px">0,16</div>
<div class="t" style="left:392px;top:457px">0,008</div>
<div class="c" style="left:0px;top:474px;width:41px;height:17px"></div>
<div class="c" style="left:40px;top:474px;width:41px;height:17px"></div>
<div class="c" style="left:80px;top:474px;width:44px;height:17px"></div>
<div class="c" style="left:123px;top:474px;width:44px;height:17px"></div>
<div class="c" style="left:209px;top:474px;width:37px;height:17px"></div>
<div class="c" style="left:281px;top:474px;width:37px;height:17px"></div>
<div class="c" style="left:353px;top:474px;width:37px;height:17px"></div>
<div class="c" style="left:389px;top:474px;width:37px;height:17px"></div>
<div class="t" style="right:922px;top:473px">12</div>
<div class="t" style="right:882px;top:473px">17</div>
<div class="t" style="left:83px;top:473px">5 x 5</div>
<div class="t" style="right:796px;top:473px">5</div>
<div class="t" style="left:212px;top:473px">3,0</div>
<div class="t" style="left:284px;top:473px">1,7</div>
<div class="t" style="left:356px;top:473px">0,25</div>
<div class="t" style="left:392px;top:473px">0,16</div>
<div class="c" style="left:0px;top:490px;width:41px;height:17px"></div>
<div class="c" style="left:40px;top:490px;width:41px;height:17px"></div>
<div class="c" style="left:80px;top:490px;width:44px;height:17px"></div>
<div class="c" style="left:123px;top:490px;width:44px;height:17px"></div>
<div class="c" style="left:209px;top:490px;width:37px;height:17px"></div>
<div class="c" style="left:281px;top:490px;width:37px;height:17px"></div>
<div class="c" style="left:353px;top:490px;width:37px;height:17px"></div>
<div class="c" style="left:389px;top:490px;width:37px;height:17px"></div>
<div class="t" style="right:922px;top:489px">17</div>
<div class="t" style="right:882px;top:489px">22</div>
<div class="t" style="left:83px;top:489px">6 x 6</div>
<div class="t" style="right:796px;top:489px">6</div>
<div class="t" style="left:212px;top:489px">3,5</div>
<div class="t" style="left:284px;top:489px">2,2</div>
<div class="t" style="left:356px;top:489px">0,25</div>
<div class="t" style="left:392px;top:489px">0,16</div>
<div class="c" style="left:0px;top:506px;width:41px;height:17px"></div>
<div class="c" style="left:40px;top:506px;width:41px;height:17px"></div>
<div class="c" style="left:80px;top:506px;width:44px;height:17px"></div>
<div class="c" style="left:123px;top:506px;width:44px;height:17px"></div>
<div class="c" style="left:209px;top:506px;width:37px;height:17px"></div>
<div class="c" style="left:281px;top:506px;width:37px;height:17px"></div>
<div class="c" style="left:353px;top:506px;width:37px;height:17px"></div>
<div class="c" style="left:389px;top:506px;width:37px;height:17px"></div>
<div class="t" style="right:922px;top:505px">22</div>
<div class="t" style="right:882px;top:505px">30</div>
<div class="t" style="left:83px;top:505px">8 x 7</div>
<div class="t" style="right:796px;top:505px">8</div>
<div class="t" style="left:212px;top:505px">4,0</div>
<div class="t" style="left:284px;top:505px">2,4</div>
<div class="t" style="left:356px;top:505px">0,25</div>
<div class="t" style="left:392px;top:505px">0,16</div>
<div class="c" style="left:0px;top:522px;width:41px;height:17px"></div>
<div class="c" style="left:40px;top:522px;width:41px;height:17px"></div>
<div class="c" style="left:80px;top:522px;width:44px;height:17px"></div>
<div class="c" style="left:123px;top:522px;width:44px;height:17px"></div>
<div class="c" style="left:209px;top:522px;width:37px;height:17px"></div>
<div class="c" style="left:281px;top:522px;width:37px;height:17px"></div>
<div class="c" style="left:353px;top:522px;width:37px;height:17px"></div>
<div class="c" style="left:389px;top:522px;width:37px;height:17px"></div>
<div class="t" style="right:922px;top:521px">30</div>
<div class="t" style="right:882px;top:521px">38</div>
<div class="t" style="left:83px;top:521px">10 x 8</div>
<div class="t" style="right:796px;top:521px">10</div>
<div class="t" style="left:212px;top:521px">5,0</div>
<div class="t" style="left:284px;top:521px">2,4</div>
<div class="t" style="left:356px;top:521px">0,40</div>
<div class="t" style="left:392px;top:521px">0,25</div>
<div class="c" style="left:0px;top:538px;width:41px;height:17px"></div>
<div class="c" style="left:40px;top:538px;width:41px;height:17px"></div>
<div class="c" style="left:80px;top:538px;width:44px;height:17px"></div>
<div class="c" style="left:123px;top:538px;width:44px;height:17px"></div>
<div class="c" style="left:209px;top:538px;width:37px;height:17px"></div>
<div class="c" style="left:281px;top:538px;width:37px;height:17px"></div>
<div class="c" style="left:353px;top:538px;width:37px;height:17px"></div>
<div class="c" style="left:389px;top:538px;width:37px;height:17px"></div>
<div class="t" style="right:922px;top:537px">38</div>
<div class="t" style="right:882px;top:537px">44</div>
<div class="t" style="left:83px;top:537px">12 x 8</div>
<div class="t" style="right:796px;top:537px">12</div>
<div class="t" style="left:212px;top:537px">5,0</div>
<div class="t" style="left:284px;top:537px">2,4</div>
<div class="t" style="left:356px;top:537px">0,40</div>
<div class="t" style="left:392px;top:537px">0,25</div>
<div class="c" style="left:0px;top:554px;width:41px;height:17px"></div>
<div class="c" style="left:40px;top:554px;width:41px;height:17px"></div>
<div class="c" style="left:80px;top:554px;width:44px;height:17px"></div>
<div class="c" style="left:123px;top:554px;width:44px;height:17px"></div>
<div class="c" style="left:209px;top:554px;width:37px;height:17px"></div>
<div class="c" style="left:281px;top:554px;width:37px;height:17px"></div>
<div class="c" style="left:353px;top:554px;width:37px;height:17px"></div>
<div class="c" style="left:389px;top:554px;width:37px;height:17px"></div>
<div class="t" style="right:922px;top:553px">44</div>
<div class="t" style="right:882px;top:553px">50</div>
<div class="t" style="left:83px;top:553px">14 x 9</div>
<div class="t" style="right:796px;top:553px">14</div>
<div class="t" style="left:212px;top:553px">5,5</div>
<div class="t" style="left:284px;top:553px">2,9</div>
<div class="t" style="left:356px;top:553px">0,40</div>
<div class="t" style="left:392px;top:553px">0,25</div>
<div class="c" style="left:0px;top:570px;width:41px;height:17px"></div>
<div class="c" style="left:40px;top:570px;width:41px;height:17px"></div>
<div class="c" style="left:80px;top:570px;width:44px;height:17px"></div>
<div class="c" style="left:123px;top:570px;width:44px;height:17px"></div>
<div class="c" style="left:209px;top:570px;width:37px;height:17px"></div>
<div class="c" style="left:281px;top:570px;width:37px;height:17px"></div>
<div class="c" style="left:353px;top:570px;width:37px;height:17px"></div>
<div class="c" style="left:389px;top:570px;width:37px;height:17px"></div>
<div class="t" style="right:922px;top:569px">50</div>
<div class="t" style="right:882px;top:569px">58</div>
<div class="t" style="left:83px;top:569px">16 x 10</div>
<div class="t" style="right:796px;top:569px">16</div>
<div class="t" style="left:212px;top:569px">6,0</div>
<div class="t" style="left:284px;top:569px">3,4</div>
<div class="t" style="left:356px;top:569px">0,40</div>
<div class="t" style="left:392px;top:569px">0,25</div>
<div class="c" style="left:0px;top:586px;width:41px;height:17px"></div>
<div class="c" style="left:40px;top:586px;width:41px;height:17px"></div>
<div class="c" style="left:80px;top:586px;width:44px;height:17px"></div>
<div class="c" style="left:123px;top:586px;width:44px;height:17px"></div>
<div class="c" style="left:209px;top:586px;width:37px;height:17px"></div>
<div class="c" style="left:281px;top:586px;width:37px;height:17px"></div>
<div class="c" style="left:353px;top:586px;width:37px;height:17px"></div>
<div class="c" style="left:389px;top:586px;width:37px;height:17px"></div>
<div class="t" style="right:922px;top:585px">58</div>
<div class="t" style="right:882px;top:585px">65</div>
<div class="t" style="left:83px;top:585px">18 x 11</div>
<div class="t" style="right:796px;top:585px">18</div>
<div class="t" style="left:212px;top:585px">7,0</div>
<div class="t" style="left:284px;top:585px">3,4</div>
<div class="t" style="left:356px;top:585px">0,40</div>
<div class="t" style="left:392px;top:585px">0,25</div>
<div class="c" style="left:0px;top:602px;width:41px;height:17px"></div>
<div class="c" style="left:40px;top:602px;width:41px;height:17px"></div>
<div class="c" style="left:80px;top:602px;width:44px;height:17px"></div>
<div class="c" style="left:123px;top:602px;width:44px;height:17px"></div>
<div class="c" style="left:209px;top:602px;width:37px;height:17px"></div>
<div class="c" style="left:281px;top:602px;width:37px;height:17px"></div>
<div class="c" style="left:353px;top:602px;width:37px;height:17px"></div>
<div class="c" style="left:389px;top:602px;width:37px;height:17px"></div>
<div class="t" style="right:922px;top:601px">65</div>
<div class="t" style="right:882px;top:601px">75</div>
<div class="t" style="left:83px;top:601px">20 x 12</div>
<div class="t" style="right:796px;top:601px">20</div>
<div class="t" style="left:212px;top:601px">7,5</div>
<div class="t" style="left:284px;top:601px">3,9</div>
<div class="t" style="left:356px;top:601px">0,60</div>
<div class="t" style="left:392px;top:601px">0,40</div>
<div class="c" style="left:0px;top:618px;width:41px;height:17px"></div>
<div class="c" style="left:40px;top:618px;width:41px;height:17px"></div>
<div class="c" style="left:80px;top:618px;width:44px;height:17px"></div>
<div class="c" style="left:123px;top:618px;width:44px;height:17px"></div>
<div class="c" style="left:209px;top:618px;width:37px;height:17px"></div>
<div class="c" style="left:281px;top:618px;width:37px;height:17px"></div>
<div class="c" style="left:353px;top:618px;width:37px;height:17px"></div>
<div class="c" style="left:389px;top:618px;width:37px;height:17px"></div>
<div class="t" style="right:922px;top:617px">75</div>
<div class="t" style="right:882px;top:617px">85</div>
<div class="t" style="left:83px;top:617px">22 x 14</div>
<div class="t" style="right:796px;top:617px">22</div>
<div class="t" style="left:212px;top:617px">9,0</div>
<div class="t" style="left:284px;top:617px">4,4</div>
<div class="t" style="left:356px;top:617px">0,60</div>
<div class="t" style="left:392px;top:617px">0,40</div>
<div class="c" style="left:0px;top:634px;width:41px;height:17px"></div>
<div class="c" style="left:40px;top:634px;width:41px;height:17px"></div>
<div class="c" style="left:80px;top:634px;width:44px;height:17px"></div>
<div class="c" style="left:123px;top:634px;width:44px;height:17px"></div>
<div class="c" style="left:209px;top:634px;width:37px;height:17px"></div>
<div class="c" style="left:281px;top:634px;width:37px;height:17px"></div>
<div class="c" style="left:353px;top:634px;width:37px;height:17px"></div>
<div class="c" style="left:389px;top:634px;width:37px;height:17px"></div>
<div class="t" style="right:922px;top:633px">85</div>
<div class="t" style="right:882px;top:633px">95</div>
<div class="t" style="left:83px;top:633px">25 x 14</div>
<div class="t" style="right:796px;top:633px">25</div>
<div class="t" style="left:212px;top:633px">9,0</div>
<div class="t" style="left:284px;top:633px">4,4</div>
<div class="t" style="left:356px;top:633px">0,60</div>
<div class="t" style="left:392px;top:633px">0,40</div>
<div class="c" style="left:0px;top:650px;width:41px;height:17px"></div>
<div class="c" style="left:40px;top:650px;width:41px;height:17px"></div>
<div class="c" style="left:80px;top:650px;width:44px;height:17px"></div>
<div class="c" style="left:123px;top:650px;width:44px;height:17px"></div>
<div class="c" style="left:209px;top:650px;width:37px;height:17px"></div>
<div class="c" style="left:281px;top:650px;width:37px;height:17px"></div>
<div class="c" style="left:353px;top:650px;width:37px;height:17px"></div>
<div class="c" style="left:389px;top:650px;width:37px;height:17px"></div>
<div class="t" style="right:922px;top:649px">95</div>
<div class="t" style="right:882px;top:649px">110</div>
<div class="t" style="left:83px;top:649px">28 x 16</div>
<div class="t" style="right:796px;top:649px">28</div>
<div class="t" style="left:212px;top:649px">10,0</div>
<div class="t" style="left:284px;top:649px">5,4</div>
<div class="t" style="left:356px;top:649px">0,60</div>
<div class="t" style="left:392px;top:649px">0,40</div>
<div class="c" style="left:0px;top:666px;width:41px;height:17px"></div>
<div class="c" style="left:40px;top:666px;width:41px;height:17px"></div>
<div class="c" style="left:80px;top:666px;width:44px;height:17px"></div>
<div class="c" style="left:123px;top:666px;width:44px;height:17px"></div>
<div class="c" style="left:209px;top:666px;width:37px;height:17px"></div>
<div class="c" style="left:281px;top:666px;width:37px;height:17px"></div>
<div class="c" style="left:353px;top:666px;width:37px;height:17px"></div>
<div class="c" style="left:389px;top:666px;width:37px;height:17px"></div>
<div class="t" style="right:922px;top:665px">110</div>
<div class="t" style="right:882px;top:665px">130</div>
<div class="t" style="left:83px;top:665px">32 x 18</div>
<div class="t" style="right:796px;top:665px">32</div>
<div class="t" style="left:212px;top:665px">11,0</div>
<div class="t" style="left:284px;top:665px">6,4</div>
<div class="t" style="left:356px;top:665px">0,6</div>
<div class="t" style="left:392px;top:665px">0,4</div>
<div class="c" style="left:0px;top:682px;width:41px;height:17px"></div>
<div class="c" style="left:40px;top:682px;width:41px;height:17px"></div>
<div class="c" style="left:80px;top:682px;width:44px;height:17px"></div>
<div class="c" style="left:123px;top:682px;width:44px;height:17px"></div>
<div class="c" style="left:209px;top:682px;width:37px;height:17px"></div>
<div class="c" style="left:281px;top:682px;width:37px;height:17px"></div>
<div class="c" style="left:353px;top:682px;width:37px;height:17px"></div>
<div class="c" style="left:389px;top:682px;width:37px;height:17px"></div>
<div class="t" style="right:922px;top:681px">130</div>
<div class="t" style="right:882px;top:681px">150</div>
<div class="t" style="left:83px;top:681px">36 x 20</div>
<div class="t" style="right:796px;top:681px">36</div>
<div class="t" style="left:212px;top:681px">12,0</div>
<div class="t" style="left:284px;top:681px">7,1</div>
<div class="t" style="left:356px;top:681px">1,0</div>
<div class="t" style="left:392px;top:681px">0,7</div>
<div class="c" style="left:0px;top:698px;width:41px;height:17px"></div>
<div class="c" style="left:40px;top:698px;width:41px;height:17px"></div>
<div class="c" style="left:80px;top:698px;width:44px;height:17px"></div>
<div class="c" style="left:123px;top:698px;width:44px;height:17px"></div>
<div class="c" style="left:209px;top:698px;width:37px;height:17px"></div>
<div class="c" style="left:281px;top:698px;width:37px;height:17px"></div>
<div class="c" style="left:353px;top:698px;width:37px;height:17px"></div>
<div class="c" style="left:389px;top:698px;width:37px;height:17px"></div>
<div class="t" style="right:922px;top:697px">150</div>
<div class="t" style="right:882px;top:697px">170</div>
<div class="t" style="left:83px;top:697px">40 x 22</div>
<div class="t" style="right:796px;top:697px">40</div>
<div class="t" style="left:212px;top:697px">13,0</div>
<div class="t" style="left:284px;top:697px">8,1</div>
<div class="t" style="left:356px;top:697px">1,0</div>
<div class="t" style="left:392px;top:697px">0,7</div>
<div class="c" style="left:0px;top:714px;width:41px;height:17px"></div>
<div class="c" style="left:40px;top:714px;width:41px;height:17px"></div>
<div class="c" style="left:80px;top:714px;width:44px;height:17px"></div>
<div class="c" style="left:123px;top:714px;width:44px;height:17px"></div>
<div class="c" style="left:209px;top:714px;width:37px;height:17px"></div>
<div class="c" style="left:281px;top:714px;width:37px;height:17px"></div>
<div class="c" style="left:353px;top:714px;width:37px;height:17px"></div>
<div class="c" style="left:389px;top:714px;width:37px;height:17px"></div>
<div class="t" style="right:922px;top:713px">170</div>
<div class="t" style="right:882px;top:713px">200</div>
<div class="t" style="left:83px;top:713px">45 x 25</div>
<div class="t" style="right:796px;top:713px">45</div>
<div class="t" style="left:212px;top:713px">15,0</div>
<div class="t" style="left:284px;top:713px">9,1</div>
<div class="t" style="left:356px;top:713px">1,0</div>
<div class="t" style="left:392px;top:713px">0,7</div>
<div class="c" style="left:166px;top:426px;width:44px;height:33px"></div>
<div class="t" style="left:169px;top:425px">+0,06</div>
<div class="t" style="left:169px;top:441px">+0,02</div>
<div class="c" style="left:166px;top:458px;width:44px;height:49px"></div>
<div class="t" style="left:169px;top:457px">+0,078</div>
<div class="t" style="left:169px;top:473px">+0,030</div>
<div class="c" style="left:166px;top:506px;width:44px;height:33px"></div>
<div class="t" style="left:169px;top:505px">+0,098</div>
<div class="t" style="left:169px;top:521px">+0,040</div>
<div class="c" style="left:166px;top:538px;width:44px;height:65px"></div>
<div class="t" style="left:169px;top:537px">+0,12</div>
<div class="t" style="left:169px;top:553px">+0,050</div>
<div class="c" style="left:166px;top:602px;width:44px;height:65px"></div>
<div class="t" style="left:169px;top:601px">+0,149</div>
<div class="t" style="left:169px;top:617px">+0,065</div>
<div class="c" style="left:166px;top:666px;width:44px;height:65px"></div>
<div class="t" style="left:169px;top:665px">+0,18</div>
<div class="t" style="left:169px;top:681px">+0,080</div>
<div class="c" style="left:245px;top:426px;width:37px;height:81px"></div>
<div class="t" style="left:248px;top:425px">+0,1</div>
<div class="t" style="left:248px;top:441px">0</div>
<div class="c" style="left:245px;top:506px;width:37px;height:33px"></div>
<div class="t" style="left:248px;top:505px">+0,2</div>
<div class="t" style="left:248px;top:521px">0</div>
<div class="c" style="left:245px;top:538px;width:37px;height:145px"></div>
<div class="t" style="left:248px;top:537px">+0,2</div>
<div class="t" style="left:248px;top:553px">0</div>
<div class="c" style="left:245px;top:682px;width:37px;height:49px"></div>
<div class="t" style="left:248px;top:681px">+0,3</div>
<div class="t" style="left:248px;top:697px">0</div>
<div class="c" style="left:317px;top:426px;width:37px;height:81px"></div>
<div class="t" style="left:320px;top:425px">+0,1</div>
<div class="t" style="left:320px;top:441px">0</div>
<div class="c" style="left:317px;top:506px;width:37px;height:33px"></div>
<div class="t" style="left:320px;top:505px">+0,2</div>
<div class="t" style="left:320px;top:521px">0</div>
<div class="c" style="left:317px;top:538px;width:37px;height:145px"></div>
<div class="t" style="left:320px;top:537px">+0,2</div>
<div class="t" style="left:320px;top:553px">0</div>
<div class="c" style="left:317px;top:682px;width:37px;height:49px"></div>
<div class="t" style="left:320px;top:681px">+0,3</div>
<div class="t" style="left:320px;top:697px">0</div>
<div class="c" style="left:435px;top:301px;width:87px;height:126px"></div>
<div class="c" style="left:521px;top:301px;width:207px;height:22px"></div>
<div class="c" style="left:521px;top:322px;width:37px;height:105px"></div>
<div class="c" style="left:557px;top:322px;width:171px;height:41px"></div>
<div class="c" style="left:557px;top:362px;width:87px;height:17px"></div>
<div class="c" style="left:643px;top:362px;width:85px;height:17px"></div>
<div class="c" style="left:557px;top:378px;width:44px;height:17px"></div>
<div class="c" style="left:600px;top:378px;width:44px;height:17px"></div>
<div class="c" style="left:557px;top:394px;width:44px;height:33px"></div>
<div class="c" style="left:600px;top:394px;width:44px;height:33px"></div>
<div class="c" style="left:643px;top:378px;width:85px;height:49px"></div>
<div class="c" style="left:727px;top:301px;width:161px;height:22px"></div>
<div class="c" style="left:727px;top:322px;width:81px;height:57px"></div>
<div class="c" style="left:807px;top:322px;width:81px;height:57px"></div>
<div class="c" style="left:727px;top:378px;width:41px;height:49px"></div>
<div class="c" style="left:767px;top:378px;width:41px;height:49px"></div>
<div class="c" style="left:807px;top:378px;width:41px;height:49px"></div>
<div class="c" style="left:847px;top:378px;width:41px;height:49px"></div>
<div class="c" style="left:887px;top:301px;width:73px;height:78px"></div>
<div class="c" style="left:887px;top:378px;width:37px;height:49px"></div>
<div class="c" style="left:923px;top:378px;width:37px;height:49px"></div>
<div class="th" style="left:438px;top:354px">b&nbsp; x&nbsp; h<sub>1</sub>&nbsp; x&nbsp; D</div>
<div class="th" style="left:524px;top:302px">Width b</div>
<div class="th" style="left:524px;top:365px">Nom</div>
<div class="th" style="left:560px;top:333px">Tolerance Class</div>
<div class="th" style="left:560px;top:361px">Normal</div>
<div class="th" style="left:646px;top:361px">Close</div>
<div class="th" style="left:560px;top:377px">Shaft</div>
<div class="th" style="left:603px;top:377px">Hub</div>
<div class="th" style="left:560px;top:401px">N9</div>
<div class="th" style="left:603px;top:401px">Js9</div>
<div class="th" style="left:646px;top:393px">Shaft &amp; Hub P6</div>
<div class="th" style="left:730px;top:302px">Depth</div>
<div class="th" style="left:730px;top:341px">Shaft t<sub>1</sub></div>
<div class="th" style="left:810px;top:341px">Hub t<sub>2</sub></div>
<div class="th" style="left:730px;top:393px">Nom</div>
<div class="th" style="left:770px;top:393px">Tol</div>
<div class="th" style="left:810px;top:393px">Nom</div>
<div class="th" style="left:850px;top:393px">Tol</div>
<div class="th" style="left:890px;top:393px">Max</div>
<div class="th" style="left:926px;top:393px">Min</div>
<div class="th" style="left:890px;top:330px">Radius R</div>
<div class="c" style="left:435px;top:426px;width:87px;height:17px"></div>
<div class="c" style="left:521px;top:426px;width:37px;height:17px"></div>
<div class="c" style="left:727px;top:426px;width:41px;height:17px"></div>
<div class="c" style="left:807px;top:426px;width:41px;height:17px"></div>
<div class="c" style="left:887px;top:426px;width:37px;height:17px"></div>
<div class="c" style="left:923px;top:426px;width:37px;height:17px"></div>
<div class="t" style="left:438px;top:425px">1,0 x 1,4 x 4</div>
<div class="t" style="left:524px;top:425px">1,0</div>
<div class="t" style="left:730px;top:425px">1,0</div>
<div class="t" style="left:810px;top:425px">0,6</div>
<div class="t" style="left:890px;top:425px">0,16</div>
<div class="t" style="left:926px;top:425px">0,08</div>
<div class="c" style="left:435px;top:442px;width:87px;height:17px"></div>
<div class="c" style="left:521px;top:442px;width:37px;height:17px"></div>
<div class="c" style="left:727px;top:442px;width:41px;height:17px"></div>
<div class="c" style="left:807px;top:442px;width:41px;height:17px"></div>
<div class="c" style="left:887px;top:442px;width:37px;height:17px"></div>
<div class="c" style="left:923px;top:442px;width:37px;height:17px"></div>
<div class="t" style="left:438px;top:441px">1,5 x 2,6 x 7</div>
<div class="t" style="left:524px;top:441px">1,5</div>
<div class="t" style="left:730px;top:441px">2,0</div>
<div class="t" style="left:810px;top:441px">0,8</div>
<div class="t" style="left:890px;top:441px">0,16</div>
<div class="t" style="left:926px;top:441px">0,08</div>
<div class="c" style="left:435px;top:458px;width:87px;height:17px"></div>
<div class="c" style="left:521px;top:458px;width:37px;height:17px"></div>
<div class="c" style="left:727px;top:458px;width:41px;height:17px"></div>
<div class="c" style="left:807px;top:458px;width:41px;height:17px"></div>
<div class="c" style="left:887px;top:458px;width:37px;height:17px"></div>
<div class="c" style="left:923px;top:458px;width:37px;height:17px"></div>
<div class="t" style="left:438px;top:457px">2,0 x 2,6 x 7</div>
<div class="t" style="left:524px;top:457px">2,0</div>
<div class="t" style="left:730px;top:457px">1,8</div>
<div class="t" style="left:810px;top:457px">1,0</div>
<div class="t" style="left:890px;top:457px">0,16</div>
<div class="t" style="left:926px;top:457px">0,08</div>
<div class="c" style="left:435px;top:474px;width:87px;height:17px"></div>
<div class="c" style="left:521px;top:474px;width:37px;height:17px"></div>
<div class="c" style="left:727px;top:474px;width:41px;height:17px"></div>
<div class="c" style="left:807px;top:474px;width:41px;height:17px"></div>
<div class="c" style="left:887px;top:474px;width:37px;height:17px"></div>
<div class="c" style="left:923px;top:474px;width:37px;height:17px"></div>
<div class="t" style="left:438px;top:473px">2,0 x 3,7 x 10</div>
<div class="t" style="left:524px;top:473px">2,0</div>
<div class="t" style="left:730px;top:473px">2,9</div>
<div class="t" style="left:810px;top:473px">1,0</div>
<div class="t" style="left:890px;top:473px">0,16</div>
<div class="t" style="left:926px;top:473px">0,08</div>
<div class="c" style="left:435px;top:490px;width:87px;height:17px"></div>
<div class="c" style="left:521px;top:490px;width:37px;height:17px"></div>
<div class="c" style="left:727px;top:490px;width:41px;height:17px"></div>
<div class="c" style="left:807px;top:490px;width:41px;height:17px"></div>
<div class="c" style="left:887px;top:490px;width:37px;height:17px"></div>
<div class="c" style="left:923px;top:490px;width:37px;height:17px"></div>
<div class="t" style="left:438px;top:489px">2,5 x 3,7 x 10</div>
<div class="t" style="left:524px;top:489px">2,5</div>
<div class="t" style="left:730px;top:489px">2,7</div>
<div class="t" style="left:810px;top:489px">1,2</div>
<div class="t" style="left:890px;top:489px">0,16</div>
<div class="t" style="left:926px;top:489px">0,08</div>
<div class="c" style="left:435px;top:506px;width:87px;height:17px"></div>
<div class="c" style="left:521px;top:506px;width:37px;height:17px"></div>
<div class="c" style="left:727px;top:506px;width:41px;height:17px"></div>
<div class="c" style="left:807px;top:506px;width:41px;height:17px"></div>
<div class="c" style="left:887px;top:506px;width:37px;height:17px"></div>
<div class="c" style="left:923px;top:506px;width:37px;height:17px"></div>
<div class="t" style="left:438px;top:505px">3,0 x 5,0 x 13</div>
<div class="t" style="left:524px;top:505px">3,0</div>
<div class="t" style="left:730px;top:505px">3,8</div>
<div class="t" style="left:810px;top:505px">1,4</div>
<div class="t" style="left:890px;top:505px">0,16</div>
<div class="t" style="left:926px;top:505px">0,08</div>
<div class="c" style="left:435px;top:522px;width:87px;height:17px"></div>
<div class="c" style="left:521px;top:522px;width:37px;height:17px"></div>
<div class="c" style="left:727px;top:522px;width:41px;height:17px"></div>
<div class="c" style="left:807px;top:522px;width:41px;height:17px"></div>
<div class="c" style="left:887px;top:522px;width:37px;height:17px"></div>
<div class="c" style="left:923px;top:522px;width:37px;height:17px"></div>
<div class="t" style="left:438px;top:521px">3,0 x 6,5 x 16</div>
<div class="t" style="left:524px;top:521px">3,0</div>
<div class="t" style="left:730px;top:521px">5,3</div>
<div class="t" style="left:810px;top:521px">1,4</div>
<div class="t" style="left:890px;top:521px">0,16</div>
<div class="t" style="left:926px;top:521px">0,08</div>
<div class="c" style="left:435px;top:538px;width:87px;height:17px"></div>
<div class="c" style="left:521px;top:538px;width:37px;height:17px"></div>
<div class="c" style="left:727px;top:538px;width:41px;height:17px"></div>
<div class="c" style="left:807px;top:538px;width:41px;height:17px"></div>
<div class="c" style="left:887px;top:538px;width:37px;height:17px"></div>
<div class="c" style="left:923px;top:538px;width:37px;height:17px"></div>
<div class="t" style="left:438px;top:537px">4,0 x 6,5 x 16</div>
<div class="t" style="left:524px;top:537px">4,0</div>
<div class="t" style="left:730px;top:537px">5,0</div>
<div class="t" style="left:810px;top:537px">1,8</div>
<div class="t" style="left:890px;top:537px">0,25</div>
<div class="t" style="left:926px;top:537px">0,16</div>
<div class="c" style="left:435px;top:554px;width:87px;height:17px"></div>
<div class="c" style="left:521px;top:554px;width:37px;height:17px"></div>
<div class="c" style="left:727px;top:554px;width:41px;height:17px"></div>
<div class="c" style="left:807px;top:554px;width:41px;height:17px"></div>
<div class="c" style="left:887px;top:554px;width:37px;height:17px"></div>
<div class="c" style="left:923px;top:554px;width:37px;height:17px"></div>
<div class="t" style="left:438px;top:553px">4,0 x 7,5 x 19</div>
<div class="t" style="left:524px;top:553px">4,0</div>
<div class="t" style="left:730px;top:553px">6,0</div>
<div class="t" style="left:810px;top:553px">1,8</div>
<div class="t" style="left:890px;top:553px">0,25</div>
<div class="t" style="left:926px;top:553px">0,16</div>
<div class="c" style="left:435px;top:570px;width:87px;height:17px"></div>
<div class="c" style="left:521px;top:570px;width:37px;height:17px"></div>
<div class="c" style="left:727px;top:570px;width:41px;height:17px"></div>
<div class="c" style="left:807px;top:570px;width:41px;height:17px"></div>
<div class="c" style="left:887px;top:570px;width:37px;height:17px"></div>
<div class="c" style="left:923px;top:570px;width:37px;height:17px"></div>
<div class="t" style="left:438px;top:569px">5,0 x 6,5 x 16</div>
<div class="t" style="left:524px;top:569px">5,0</div>
<div class="t" style="left:730px;top:569px">4,5</div>
<div class="t" style="left:810px;top:569px">2,3</div>
<div class="t" style="left:890px;top:569px">0,25</div>
<div class="t" style="left:926px;top:569px">0,16</div>
<div class="c" style="left:435px;top:586px;width:87px;height:17px"></div>
<div class="c" style="left:521px;top:586px;width:37px;height:17px"></div>
<div class="c" style="left:727px;top:586px;width:41px;height:17px"></div>
<div class="c" style="left:807px;top:586px;width:41px;height:17px"></div>
<div class="c" style="left:887px;top:586px;width:37px;height:17px"></div>
<div class="c" style="left:923px;top:586px;width:37px;height:17px"></div>
<div class="t" style="left:438px;top:585px">5,0 x 7,5 x 19</div>
<div class="t" style="left:524px;top:585px">5,0</div>
<div class="t" style="left:730px;top:585px">5,5</div>
<div class="t" style="left:810px;top:585px">2,3</div>
<div class="t" style="left:890px;top:585px">0,25</div>
<div class="t" style="left:926px;top:585px">0,16</div>
<div class="c" style="left:435px;top:602px;width:87px;height:17px"></div>
<div class="c" style="left:521px;top:602px;width:37px;height:17px"></div>
<div class="c" style="left:727px;top:602px;width:41px;height:17px"></div>
<div class="c" style="left:807px;top:602px;width:41px;height:17px"></div>
<div class="c" style="left:887px;top:602px;width:37px;height:17px"></div>
<div class="c" style="left:923px;top:602px;width:37px;height:17px"></div>
<div class="t" style="left:438px;top:601px">5,0 x 9.0 x 22</div>
<div class="t" style="left:524px;top:601px">5,0</div>
<div class="t" style="left:730px;top:601px">7,0</div>
<div class="t" style="left:810px;top:601px">2,3</div>
<div class="t" style="left:890px;top:601px">0,25</div>
<div class="t" style="left:926px;top:601px">0,16</div>
<div class="c" style="left:435px;top:618px;width:87px;height:17px"></div>
<div class="c" style="left:521px;top:618px;width:37px;height:17px"></div>
<div class="c" style="left:727px;top:618px;width:41px;height:17px"></div>
<div class="c" style="left:807px;top:618px;width:41px;height:17px"></div>
<div class="c" style="left:887px;top:618px;width:37px;height:17px"></div>
<div class="c" style="left:923px;top:618px;width:37px;height:17px"></div>
<div class="t" style="left:438px;top:617px">6,0 x 9,0 x 22</div>
<div class="t" style="left:524px;top:617px">6,0</div>
<div class="t" style="left:730px;top:617px">6,5</div>
<div class="t" style="left:810px;top:617px">2,8</div>
<div class="t" style="left:890px;top:617px">0,25</div>
<div class="t" style="left:926px;top:617px">0,16</div>
<div class="c" style="left:435px;top:634px;width:87px;height:17px"></div>
<div class="c" style="left:521px;top:634px;width:37px;height:17px"></div>
<div class="c" style="left:727px;top:634px;width:41px;height:17px"></div>
<div class="c" style="left:807px;top:634px;width:41px;height:17px"></div>
<div class="c" style="left:887px;top:634px;width:37px;height:17px"></div>
<div class="c" style="left:923px;top:634px;width:37px;height:17px"></div>
<div class="t" style="left:438px;top:633px">6,0 x 11,0 x 28</div>
<div class="t" style="left:524px;top:633px">6,0</div>
<div class="t" style="left:730px;top:633px">7,5</div>
<div class="t" style="left:810px;top:633px">2,8</div>
<div class="t" style="left:890px;top:633px">0,25</div>
<div class="t" style="left:926px;top:633px">0,16</div>
<div class="c" style="left:435px;top:650px;width:87px;height:17px"></div>
<div class="c" style="left:521px;top:650px;width:37px;height:17px"></div>
<div class="c" style="left:727px;top:650px;width:41px;height:17px"></div>
<div class="c" style="left:807px;top:650px;width:41px;height:17px"></div>
<div class="c" style="left:887px;top:650px;width:37px;height:17px"></div>
<div class="c" style="left:923px;top:650px;width:37px;height:17px"></div>
<div class="t" style="left:438px;top:649px">8,0 x 11,0 x 28</div>
<div class="t" style="left:524px;top:649px">8,0</div>
<div class="t" style="left:730px;top:649px">8,0</div>
<div class="t" style="left:810px;top:649px">3,3</div>
<div class="t" style="left:890px;top:649px">0,40</div>
<div class="t" style="left:926px;top:649px">0,25</div>
<div class="c" style="left:435px;top:666px;width:87px;height:17px"></div>
<div class="c" style="left:521px;top:666px;width:37px;height:17px"></div>
<div class="c" style="left:727px;top:666px;width:41px;height:17px"></div>
<div class="c" style="left:807px;top:666px;width:41px;height:17px"></div>
<div class="c" style="left:887px;top:666px;width:37px;height:17px"></div>
<div class="c" style="left:923px;top:666px;width:37px;height:17px"></div>
<div class="t" style="left:438px;top:665px">10,0 x 13,0 x 32</div>
<div class="t" style="left:524px;top:665px">10,0</div>
<div class="t" style="left:730px;top:665px">10,0</div>
<div class="t" style="left:810px;top:665px">3,3</div>
<div class="t" style="left:890px;top:665px">0,4</div>
<div class="t" style="left:926px;top:665px">0,25</div>
<div class="c" style="left:557px;top:426px;width:44px;height:113px"></div>
<div class="t" style="left:560px;top:425px">-0,004</div>
<div class="t" style="left:560px;top:441px">-0,029</div>
<div class="c" style="left:557px;top:538px;width:44px;height:113px"></div>
<div class="t" style="left:560px;top:537px">0</div>
<div class="t" style="left:560px;top:553px">-0,030</div>
<div class="c" style="left:557px;top:650px;width:44px;height:33px"></div>
<div class="t" style="left:560px;top:649px">0</div>
<div class="t" style="left:560px;top:665px">-0.036</div>
<div class="c" style="left:600px;top:426px;width:44px;height:113px"></div>
<div class="t" style="left:603px;top:425px">+0,012</div>
<div class="t" style="left:603px;top:441px">-0,012</div>
<div class="c" style="left:600px;top:538px;width:44px;height:113px"></div>
<div class="t" style="left:603px;top:537px">+0,015</div>
<div class="t" style="left:603px;top:553px">-0,015</div>
<div class="c" style="left:600px;top:650px;width:44px;height:33px"></div>
<div class="t" style="left:603px;top:649px">+0,018</div>
<div class="t" style="left:603px;top:665px">-0.018</div>
<div class="c" style="left:643px;top:426px;width:85px;height:113px"></div>
<div class="t" style="left:646px;top:425px">-0,006</div>
<div class="t" style="left:646px;top:441px">-0,0031</div>
<div class="c" style="left:643px;top:538px;width:85px;height:113px"></div>
<div class="t" style="left:646px;top:537px">-0,012</div>
<div class="t" style="left:646px;top:553px">-0,042</div>
<div class="c" style="left:643px;top:650px;width:85px;height:33px"></div>
<div class="t" style="left:646px;top:649px">+0,015</div>
<div class="t" style="left:646px;top:665px">-0.051</div>
<div class="c" style="left:767px;top:426px;width:41px;height:81px"></div>
<div class="t" style="left:770px;top:425px">+0,1</div>
<div class="t" style="left:770px;top:441px">0</div>
<div class="c" style="left:767px;top:506px;width:41px;height:97px"></div>
<div class="t" style="left:770px;top:505px">+0,2</div>
<div class="t" style="left:770px;top:521px">0</div>
<div class="c" style="left:767px;top:602px;width:41px;height:81px"></div>
<div class="t" style="left:770px;top:601px">+0,3</div>
<div class="t" style="left:770px;top:617px">0</div>
<div class="c" style="left:847px;top:426px;width:41px;height:209px"></div>
<div class="t" style="left:850px;top:425px">+0,1</div>
<div class="t" style="left:850px;top:441px">0</div>
<div class="c" style="left:847px;top:634px;width:41px;height:49px"></div>
<div class="t" style="left:850px;top:633px">+0,2</div>
<div class="t" style="left:850px;top:649px">0</div>
</body></html>
